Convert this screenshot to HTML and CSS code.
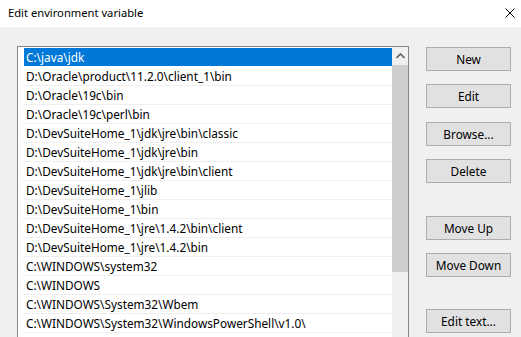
FILE: index.html
```html
<!DOCTYPE html>
<html>
<head>
<meta charset="utf-8">
<link rel="stylesheet" href="styles.css">
</head>
<body>
<div class="window">
  <div class="titlebar">
    <span class="title">Edit environment variable</span>
    <svg class="close" width="10" height="10" viewBox="0 0 10 10"><path d="M0.5 0.5 L9.5 9.5 M9.5 0.5 L0.5 9.5" stroke="#000" stroke-width="1" fill="none"/></svg>
  </div>
  <div class="content">
    <div class="listbox">
      <ul class="items">
        <li class="item selected">C:\java\jdk</li>
        <li class="item">D:\Oracle\product\11.2.0\client_1\bin</li>
        <li class="item">D:\Oracle\19c\bin</li>
        <li class="item">D:\Oracle\19c\perl\bin</li>
        <li class="item">D:\DevSuiteHome_1\jdk\jre\bin\classic</li>
        <li class="item">D:\DevSuiteHome_1\jdk\jre\bin</li>
        <li class="item">D:\DevSuiteHome_1\jdk\jre\bin\client</li>
        <li class="item">D:\DevSuiteHome_1\jlib</li>
        <li class="item">D:\DevSuiteHome_1\bin</li>
        <li class="item">D:\DevSuiteHome_1\jre\1.4.2\bin\client</li>
        <li class="item">D:\DevSuiteHome_1\jre\1.4.2\bin</li>
        <li class="item">C:\WINDOWS\system32</li>
        <li class="item">C:\WINDOWS</li>
        <li class="item">C:\WINDOWS\System32\Wbem</li>
        <li class="item">C:\WINDOWS\System32\WindowsPowerShell\v1.0\</li>
      </ul>
      <div class="scrollbar">
        <div class="arrow">
          <svg width="9" height="6" viewBox="0 0 9 6"><path d="M0.5 5 L4.5 1 L8.5 5" stroke="#606060" stroke-width="1.6" fill="none"/></svg>
        </div>
        <div class="thumb"></div>
      </div>
    </div>
    <div class="buttons">
      <button class="btn">New</button>
      <button class="btn gap13">Edit</button>
      <button class="btn gap14">Browse...</button>
      <button class="btn gap13">Delete</button>
      <button class="btn gap33">Move Up</button>
      <button class="btn gap13">Move Down</button>
      <button class="btn gap32">Edit text...</button>
    </div>
  </div>
</div>
</body>
</html>
```
FILE: styles.css
```css
html, body {
  margin: 0;
  padding: 0;
  background: #f0f0f0;
  overflow: hidden;
}
body {
  width: 521px;
  height: 337px;
  font-family: "Noto Sans", "DejaVu Sans", sans-serif;
  font-size: 11.8px;
  color: #000;
}
.window {
  height: 337px;
  overflow: hidden;
}
.titlebar {
  height: 27px;
  background: #fff;
  display: flex;
  align-items: center;
  justify-content: space-between;
  padding: 0 6px 0 8px;
}
.title {
  font-size: 11.2px;
  line-height: 16px;
  margin-top: -2px;
}
.close {
  display: block;
  margin-top: -2px;
}
.content {
  display: flex;
  align-items: flex-start;
  padding: 19px 0 0 17px;
  gap: 17px;
}
.listbox {
  width: 390px;
  height: 300px;
  border: 1px solid #828790;
  border-bottom: none;
  background: #fff;
  display: flex;
}
.items {
  list-style: none;
  margin: 0;
  padding: 1px 0 0 5px;
  flex: 1;
}
.item {
  height: 18px;
  line-height: 18px;
  border-bottom: 1px solid #efefef;
  padding-left: 3px;
  white-space: nowrap;
}
.item.selected {
  background: #0078d7;
  color: #fff;
  border-bottom-color: #fff;
  margin-left: 1px;
  padding-left: 2px;
}
.scrollbar {
  width: 16px;
  background: #f0f0f0;
  display: flex;
  flex-direction: column;
  align-items: center;
}
.arrow {
  height: 18px;
  display: flex;
  align-items: center;
  justify-content: center;
}
.thumb {
  width: 16px;
  height: 207px;
  background: #cdcdcd;
}
.buttons {
  display: flex;
  flex-direction: column;
  padding-top: 1px;
}
.btn {
  width: 85px;
  height: 24px;
  background: #e1e1e1;
  border: 1px solid #adadad;
  font-family: inherit;
  font-size: 11.8px;
  color: #000;
  padding: 0;
  margin: 0;
}
.gap13 { margin-top: 13px; }
.gap14 { margin-top: 14px; }
.gap33 { margin-top: 33px; }
.gap32 { margin-top: 32px; }
```
